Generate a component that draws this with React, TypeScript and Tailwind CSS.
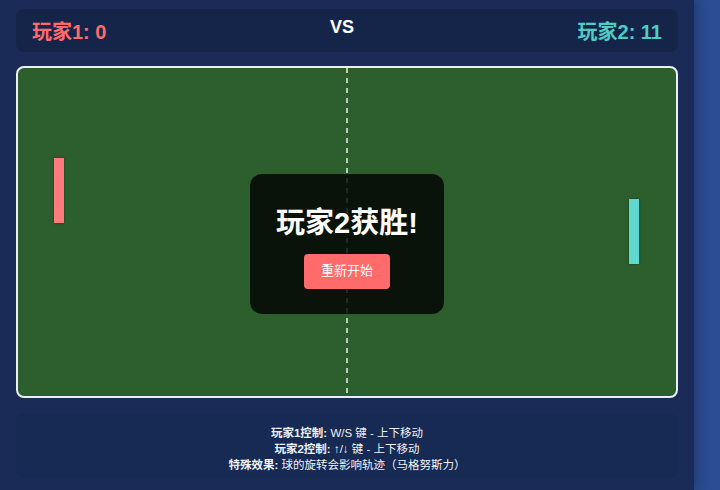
import React from "react";

const font = { fontFamily: '"Liberation Sans", "Noto Sans CJK SC", sans-serif' };

function Court() {
  return (
    <div className="relative h-[332px] w-full overflow-hidden rounded-[8px] border-2 border-[#e8f0f4] bg-[#2d5f2e]">
      <svg className="absolute inset-0 h-full w-full" viewBox="0 0 658 328" preserveAspectRatio="none">
        <line x1="329" y1="0" x2="329" y2="328" stroke="#e8efe8" strokeWidth="1.5" strokeDasharray="5 5" />
      </svg>
      <div className="absolute left-[36px] top-[90px] h-[65px] w-[10px] bg-[#ff7b7b] shadow-[0_0_3px_rgba(0,0,0,0.4)]" />
      <div className="absolute left-[611px] top-[131px] h-[65px] w-[10px] bg-[#5fd8cf] shadow-[0_0_3px_rgba(0,0,0,0.4)]" />
      <div className="absolute left-[232px] top-[106px] flex h-[140px] w-[194px] flex-col items-center justify-center rounded-[12px] bg-[rgba(0,0,0,0.8)] pt-[9px]">
        <h2 className="text-[29px] font-bold leading-none text-white">玩家2获胜!</h2>
        <button
          type="button"
          className="mt-[16px] h-[35px] w-[86px] rounded-[4px] bg-[#ff6b6b] text-[13px] text-white"
        >
          重新开始
        </button>
      </div>
    </div>
  );
}

export default function App() {
  return (
    <div className="h-[490px] w-[720px] overflow-hidden bg-gradient-to-r from-[#1b2a5c] to-[#2c4d92]" style={font}>
      <div className="flex h-full w-[694px] flex-col bg-[#1b2b58] px-4 pt-[9px] shadow-[4px_0_10px_rgba(0,0,0,0.2)]">
        <div className="flex h-[43px] items-center justify-between rounded-[8px] bg-[#152549] px-4 pt-[3px]">
          <span className="text-[20px] font-bold text-[#ff6b6b]">玩家1: 0</span>
          <span className="-mt-[9px] text-[18px] font-bold text-white">VS</span>
          <span className="text-[20px] font-bold text-[#4ecdc4]">玩家2: 11</span>
        </div>
        <div className="mt-[14px]">
          <Court />
        </div>
        <div className="mt-4 flex h-[64px] flex-col items-center justify-center rounded-[8px] bg-[#162a53] pt-[5px] text-[11.5px] leading-[16px] text-[#eef2f8]">
          <p>
            <b>玩家1控制:</b> W/S 键 - 上下移动
          </p>
          <p>
            <b>玩家2控制:</b> ↑/↓ 键 - 上下移动
          </p>
          <p>
            <b>特殊效果:</b> 球的旋转会影响轨迹（马格努斯力）
          </p>
        </div>
      </div>
    </div>
  );
}
